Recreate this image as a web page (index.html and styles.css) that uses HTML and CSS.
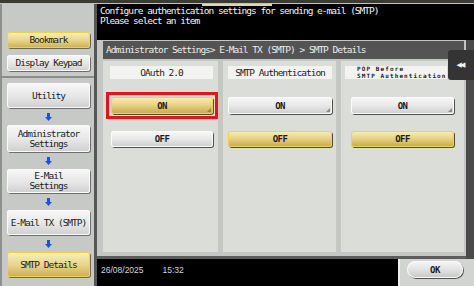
FILE: index.html
```html
<!DOCTYPE html>
<html>
<head>
<meta charset="utf-8">
<link rel="stylesheet" href="styles.css">
</head>
<body>
<div class="screen">
  <div class="topline"></div>
  <div class="body">
    <aside class="side">
      <div class="side-top">
        <button class="sbtn yel">Bookmark</button>
        <button class="sbtn">Display Keypad</button>
      </div>
      <nav class="side-nav">
        <button class="sbtn nav h25">Utility</button>
        <div class="arrow"><svg width="7" height="8" viewBox="0 0 7 8"><path d="M2 0h3v4h2L3.5 8 0 4h2z" fill="#1f50e6"/></svg></div>
        <button class="sbtn nav h27 two">Administrator<br>Settings</button>
        <div class="arrow"><svg width="7" height="8" viewBox="0 0 7 8"><path d="M2 0h3v4h2L3.5 8 0 4h2z" fill="#1f50e6"/></svg></div>
        <button class="sbtn nav h24 two">E-Mail<br>Settings</button>
        <div class="arrow"><svg width="7" height="8" viewBox="0 0 7 8"><path d="M2 0h3v4h2L3.5 8 0 4h2z" fill="#1f50e6"/></svg></div>
        <button class="sbtn nav h25">E-Mail TX (SMTP)</button>
        <div class="arrow"><svg width="7" height="8" viewBox="0 0 7 8"><path d="M2 0h3v4h2L3.5 8 0 4h2z" fill="#1f50e6"/></svg></div>
        <button class="sbtn nav h25 yel">SMTP Details</button>
      </nav>
    </aside>
    <main class="main">
      <div class="msg">
        <div class="seg"></div>
        <p>Configure authentication settings for sending e-mail (SMTP)</p>
        <p>Please select an item</p>
      </div>
      <div class="work">
        <section class="panel">
          <div class="crumb">Administrator Settings&gt; E-Mail TX (SMTP) &gt; SMTP Details</div>
          <div class="cols">
            <div class="col c1">
              <div class="lbl">OAuth 2.0</div>
              <div class="selframe"><button class="key opt yel">ON</button></div>
              <button class="key opt off">OFF</button>
            </div>
            <div class="col c2">
              <div class="lbl">SMTP Authentication</div>
              <button class="key opt">ON</button>
              <button class="key opt off yel">OFF</button>
            </div>
            <div class="col c3">
              <div class="lbl small"><span>POP Before</span><span>SMTP Authentication</span></div>
              <button class="key opt">ON</button>
              <button class="key opt off yel">OFF</button>
            </div>
          </div>
        </section>
        <div class="rstrip"></div>
        <button class="tab">&#9664;&#9664;</button>
      </div>
      <footer class="foot">
        <div class="clock"><span>26/08/2025</span><span>15:32</span></div>
        <div class="okbox"><button class="okbtn">OK</button></div>
      </footer>
    </main>
  </div>
</div>
</body>
</html>
```
FILE: styles.css
```css
* { box-sizing: border-box; }
html, body { margin: 0; padding: 0; }
body {
  width: 474px;
  height: 286px;
  overflow: hidden;
  background: #000;
  font-family: "DejaVu Sans Mono", "Liberation Mono", monospace;
  font-size: 9.5px;
  letter-spacing: -1px;
  color: #1c1c1c;
}
button {
  font-family: inherit;
  font-size: inherit;
  letter-spacing: inherit;
  color: inherit;
  padding: 0;
  margin: 0;
  border: 0;
}
p { margin: 0; }
.screen { display: flex; flex-direction: column; height: 286px; }
.topline {
  height: 4px;
  background: #3a3a37;
  border-bottom: 1px solid #c9c98f;
}
.body { display: flex; flex: 1; min-height: 0; }

/* side */
.side {
  width: 97px;
  background: #c7c9c6;
  border-left: 2px solid #8e908d;
  border-right: 3px solid #565656;
  display: flex;
  flex-direction: column;
}
.side-top {
  padding: 28px 4px 5px 5px;
  display: flex;
  flex-direction: column;
  gap: 7px;
  border-bottom: 2px solid #8b8d8a;
}
.side-nav {
  padding: 5px 4px 0 5px;
  display: flex;
  flex-direction: column;
}
.sbtn {
  height: 16px;
  width: 83px;
  border-radius: 3px;
  background: linear-gradient(#f8f8f8, #e6e6e6 55%, #cfcfcf);
  box-shadow: 1px 1px 0 #6e6e6e, inset 0 0 0 1px #fafafa;
  text-align: center;
  line-height: 10px;
}
.sbtn.yel {
  background: linear-gradient(#f8f0bd, #e9d68d 50%, #cbad53);
  box-shadow: inset 0 0 0 1px #ecd246, 1px 1px 0 #6e6a50;
}
.h25 { height: 25px; }
.h27 { height: 27px; }
.h24 { height: 24px; }
.arrow {
  height: 17px;
  display: flex;
  align-items: center;
  justify-content: center;
}
.arrow svg { display: block; }

/* main */
.main { flex: 1; display: flex; flex-direction: column; min-width: 0; }
.msg {
  height: 36px;
  color: #f4f4f4;
  padding-left: 3px;
  line-height: 10px;
}
.seg {
  width: 70px;
  height: 2px;
  margin-left: 102px;
  background: #d8d8b0;
}
.work {
  height: 219px;
  display: flex;
  position: relative;
}
.panel {
  width: 369px;
  background: #c4c7c3;
  padding: 1px 2px 4px 6px;
  border-bottom: 3px solid #5d5d5d;
  display: flex;
  flex-direction: column;
}
.crumb {
  height: 18px;
  line-height: 18px;
  background: #545454;
  color: #ececec;
  padding-left: 3px;
  white-space: nowrap;
}
.cols {
  flex: 1;
  display: grid;
  grid-template-columns: 115px 113px 1fr;
  gap: 5px;
  padding-top: 2px;
}
.col {
  background: #dbddd9;
  padding-top: 5px;
  display: flex;
  flex-direction: column;
}
.lbl {
  height: 13px;
  line-height: 13px;
  background: #f3f4f2;
  text-align: center;
  white-space: nowrap;
}
.lbl.small {
  display: flex;
  flex-direction: column;
  text-align: left;
  font-size: 6px;
  letter-spacing: 1.1px;
  line-height: 6.5px;
  padding: 0 0 0 12px;
  font-weight: bold;
}
.c1 .lbl { margin: 0 5px 0 7px; }
.c2 .lbl { margin: 0 4px 0 5px; }
.c3 .lbl { margin: 0 17px 0 4px; }
.c1 .opt { margin-left: 8px; margin-right: 5px; }
.c2 .opt { margin-left: 5px; margin-right: 4px; }
.c3 .opt { margin-left: 10px; margin-right: 10px; }

.selframe {
  margin: 13px 0 0 3px;
  border: 3px solid #e3141a;
  padding: 2px;
}
.c1 .selframe .opt { margin: 0; width: 100%; }

.key {
  position: relative;
  display: block;
  border-radius: 3px;
  background: linear-gradient(#f8f8f8, #e8e8e8 50%, #cdcdcd);
  box-shadow: 1px 1px 0 #505050, inset 0 0 0 1px #fbfbfb;
  font-weight: bold;
  font-size: 9px;
  letter-spacing: -0.6px;
  text-align: center;
}
.key::after {
  content: "";
  position: absolute;
  right: 2px;
  bottom: 2px;
  border-left: 4px solid transparent;
  border-bottom: 4px solid #8c8c8c;
}
.key.yel {
  background: linear-gradient(#f8efba, #e9d487 45%, #c7a74a);
  box-shadow: inset 0 0 0 1px #efd43c, 1px 1px 0 #4e4a34;
}
.key.yel::after { border-bottom-color: #9a8540; }
.key.off::after { display: none; }
.opt { height: 17px; margin-top: 18px; }
.opt.off { height: 16px; margin-top: 17px; }
.selframe + .opt.off { margin-top: 12px; }

.rstrip { flex: 1; background: #4a4a4a; }
.tab {
  position: absolute;
  right: 0;
  top: 10px;
  width: 26px;
  height: 30px;
  background: #343434;
  border-radius: 3px 0 0 3px;
  color: #f2f2f2;
  font-family: "DejaVu Sans", sans-serif;
  font-size: 7px;
  letter-spacing: -2px;
  text-align: center;
  padding-right: 2px;
}

.foot { height: 27px; display: flex; }
.clock {
  flex: 1;
  padding: 6px 0 0 4px;
  display: flex;
  gap: 19px;
  font-family: "Liberation Sans", Arial, sans-serif;
  font-size: 8.5px;
  letter-spacing: 0;
  color: #d6d6d6;
  line-height: 10px;
}
.okbox {
  width: 76px;
  background: #d2d4d1;
  border-left: 2px solid #f0f0f0;
  padding: 2px 0 0 7px;
}
.okbtn {
  display: block;
  width: 56px;
  height: 17px;
  border-radius: 9px;
  background: linear-gradient(#f6f6f6, #e2e2e2 50%, #c6c6c6);
  box-shadow: 1px 1px 0 #505050, inset 0 0 0 1px #fafafa;
  font-weight: bold;
  font-size: 9px;
  letter-spacing: -0.5px;
}
```
